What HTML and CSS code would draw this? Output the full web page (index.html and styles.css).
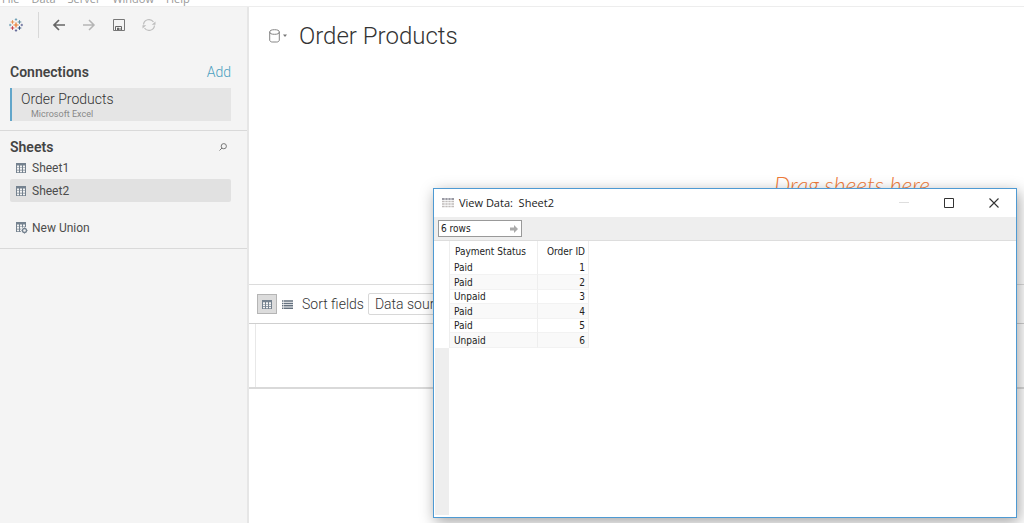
FILE: index.html
```html
<!DOCTYPE html>
<html lang="en">
<head>
<meta charset="utf-8">
<title>Order Products</title>
<link rel="stylesheet" href="styles.css">
</head>
<body>
<svg class="defs" aria-hidden="true">
  <symbol id="grid" viewBox="0 0 10 10">
    <path d="M0 0h10v10H0z" fill="#75828f"/>
    <path d="M1 2.500h2v1.900H1zM4 2.500h2v1.900H4zM7 2.500h2v1.900H7zM1 5h2v1.800H1zM4 5h2v1.800H4zM7 5h2v1.800H7zM1 7.400h2v1.900H1zM4 7.400h2v1.900H4zM7 7.400h2v1.900H7z" fill="#f4f4f4"/>
  </symbol>
</svg>
<nav class="menubar">
  <a href="#">File</a><a href="#">Data</a><a href="#">Server</a><a href="#">Window</a><a href="#">Help</a>
</nav>
<div class="app">
  <aside class="sidebar">
    <div class="tools">
      <button class="tool logo" aria-label="Start page">
        <svg width="14" height="14" viewBox="0 0 14 14" fill="none" stroke-width="1">
          <path d="M7 4.500v5M4.500 7h5" stroke="#ea7b2c" stroke-width="1.200"/>
          <path d="M3.500 2.200v3.600M1.700 4h3.600" stroke="#e79355"/>
          <path d="M10.500 2.200v3.600M8.700 4h3.600" stroke="#5b8a9b"/>
          <path d="M3.500 8.200v3.600M1.700 10h3.600" stroke="#c6404c"/>
          <path d="M10.500 8.200v3.600M8.700 10h3.600" stroke="#35527f"/>
          <path d="M7 .2v2.600M5.800 1.500h2.400M0 7h2.400M1.200 5.800v2.400" stroke="#74a3b8"/>
          <path d="M7 11.200v2.600M5.800 12.500h2.400M11.600 7H14M12.800 5.800v2.400" stroke="#6a6f9c"/>
        </svg>
      </button>
      <span class="tool-rule"></span>
      <button class="tool back" aria-label="Back">
        <svg width="14" height="12" viewBox="0 0 14 12" fill="none" stroke="#666" stroke-width="1.700"><path d="M13 6H2M7 1L2 6l5 5"/></svg>
      </button>
      <button class="tool" aria-label="Forward">
        <svg width="14" height="12" viewBox="0 0 14 12" fill="none" stroke="#b5b5b5" stroke-width="1.500"><path d="M1 6h11M7 1l5 5-5 5"/></svg>
      </button>
      <button class="tool" aria-label="Save">
        <svg width="14" height="14" viewBox="0 0 14 14" fill="none" stroke="#777"><path d="M1.500 1.500h11v11h-11z"/><path d="M3.500 12V8.500h6V12M5.500 12v-2h1v2M8 10v2" stroke="#666"/></svg>
      </button>
      <button class="tool" aria-label="Refresh">
        <svg width="14" height="14" viewBox="0 0 14 14" fill="none" stroke="#bdbdbd" stroke-width="1.200"><path d="M1.500 6.500a5.500 5.500 0 0 1 10-2.500M12.500 7.500a5.500 5.500 0 0 1-10 2.500"/><path d="M13.500 3.500v3.300h-3.800zM.5 10.500V7.200h3.800z" fill="#bdbdbd" stroke="none"/></svg>
      </button>
    </div>
    <section class="panel connections">
      <div class="panel-head"><h2>Connections</h2><a class="add" href="#">Add</a></div>
      <button class="connection"><span class="conn-name">Order Products</span><span class="conn-type">Microsoft Excel</span></button>
    </section>
    <section class="panel sheets">
      <div class="panel-head"><h2>Sheets</h2>
        <button class="search" aria-label="Search sheets"><svg width="8" height="8" viewBox="0 0 8 8" fill="none" stroke="#777"><circle cx="4.800" cy="3.200" r="2.600"/><path d="M3 5L.5 7.500"/></svg></button>
      </div>
      <button class="sheet"><svg width="10" height="10"><use href="#grid"/></svg>Sheet1</button>
      <button class="sheet selected"><svg width="10" height="10"><use href="#grid"/></svg>Sheet2</button>
      <button class="sheet union">
        <svg width="12" height="12" viewBox="0 0 12 12"><use href="#grid" width="10" height="10"/><circle cx="8.500" cy="8.500" r="3.500" fill="#f4f4f4"/><circle cx="8.500" cy="8.500" r="2" fill="none" stroke="#75828f" stroke-width="1.300"/><path d="M8.500 5.500v1M8.500 10.500v1M5.500 8.500h1M10.500 8.500h1" stroke="#75828f"/></svg>New Union</button>
    </section>
  </aside>
  <main class="main">
    <header class="source">
      <button class="source-menu" aria-label="Data source menu">
        <svg width="20" height="14" viewBox="0 0 20 14" fill="none" stroke="#858585"><ellipse cx="5.500" cy="3" rx="4.800" ry="2.300"/><path d="M.7 3v8c0 1.300 1.200 2 2.500 2h4.600c1.300 0 2.500-.7 2.500-2V3"/><path d="M14 5.500h4L16 8z" fill="#777" stroke="none"/></svg>
      </button>
      <h1>Order Products</h1>
    </header>
    <div class="canvas"><p class="hint">Drag sheets here</p></div>
    <div class="fields-bar">
      <button class="view active" aria-label="Grid view"><svg width="10" height="9" viewBox="0 0 10 10" preserveAspectRatio="none"><use href="#grid"/></svg></button>
      <button class="view" aria-label="List view"><svg width="11" height="9" viewBox="0 0 11 9"><path d="M0 1h1.500M0 3.400h1.500M0 5.800h1.500M0 8.200h1.500M2 1h9M2 3.400h9M2 5.800h9M2 8.200h9" stroke="#64717f" stroke-width="1.500"/></svg></button>
      <label for="sort">Sort fields</label>
      <select id="sort"><option>Data source order</option></select>
    </div>
    <div class="preview"></div>
  </main>
</div>
<section class="dialog" role="dialog" aria-labelledby="dialog-title">
  <header class="titlebar">
    <svg width="12" height="10" viewBox="0 0 12 10" fill="none"><path d="M0 1h12" stroke="#9999a3" stroke-width="2"/><path d="M0 3.500h12M0 6h12M0 8.500h12" stroke="#c0bcba" stroke-width="1.700"/><path d="M3 0v10M6 0v10M9 0v10" stroke="#fff" stroke-width=".7"/></svg>
    <h2 id="dialog-title">View Data:&nbsp; Sheet2</h2>
    <button aria-label="Minimize"><svg width="10" height="10" fill="none" stroke="#dedede"><path d="M0 4.500h10"/></svg></button>
    <button aria-label="Maximize"><svg width="10" height="10" fill="none" stroke="#333"><path d="M.5.5h9v9h-9z"/></svg></button>
    <button aria-label="Close"><svg width="10" height="10" fill="none" stroke="#333" stroke-width="1.100"><path d="M.5.5l9 9M9.500.5l-9 9"/></svg></button>
  </header>
  <div class="rows-bar">
    <div class="rows-box">
      <input aria-label="Row count" value="6 rows">
      <button aria-label="Apply row count"><svg width="8" height="8" viewBox="0 0 8 8"><path d="M0 2.500h4V0l4 4-4 4V5.500H0z" fill="#aaa"/></svg></button>
    </div>
  </div>
  <div class="data">
    <div class="gutter"></div>
    <table>
      <thead><tr><th>Payment Status</th><th>Order ID</th></tr></thead>
      <tbody>
        <tr><td>Paid</td><td>1</td></tr>
        <tr><td>Paid</td><td>2</td></tr>
        <tr><td>Unpaid</td><td>3</td></tr>
        <tr><td>Paid</td><td>4</td></tr>
        <tr><td>Paid</td><td>5</td></tr>
        <tr><td>Unpaid</td><td>6</td></tr>
      </tbody>
    </table>
  </div>
</section>
</body>
</html>
```
FILE: styles.css
```css
* { box-sizing: border-box; }
body {
  margin: 0;
  height: 100vh;
  display: flex;
  flex-direction: column;
  overflow: hidden;
  background: #fff;
  color: #4c4c4c;
  font: 13px/16px Roboto, sans-serif;
}
h1, h2, p { margin: 0; font-weight: 400; }
button { margin: 0; padding: 0; border: 0; background: none; font: inherit; color: inherit; text-align: left; }
svg { display: block; flex: none; }
a { text-decoration: none; color: inherit; }
.defs { position: absolute; width: 0; height: 0; }

.menubar {
  height: 7px;
  flex: none;
  display: flex;
  align-items: flex-end;
  gap: 12px;
  padding-left: 2px;
  overflow: hidden;
  border-bottom: 1px solid #ededed;
  color: #999;
  font: 11px/14px "Open Sans", sans-serif;
}

.app { flex: 1; display: flex; min-height: 0; }
.sidebar { width: 249px; flex: none; background: #f4f4f4; border-right: 2px solid #e6e6e6; }
.tools { display: flex; align-items: center; height: 36px; padding-left: 9px; gap: 16px; }
.tool { width: 14px; }
.tool-rule { width: 1px; height: 26px; margin: 0 -3px 0 -1px; background: #d8d8d8; }
.panel { border-bottom: 1px solid #d9d9d9; }
.panel-head { display: flex; justify-content: space-between; align-items: center; padding: 0 16px 0 10px; }
.panel-head h2 { font-size: 14px; font-weight: 600; color: #444; }
.connections { padding: 20px 0 9px; }
.connections .panel-head { height: 18px; margin-bottom: 7px; }
.add { font-size: 14px; font-weight: 300; color: #4b9fc0; }
.connection {
  display: block;
  width: 221px;
  height: 33px;
  margin-left: 10px;
  padding-left: 9px;
  border-left: 2px solid #62a6ca;
  background: #e5e5e5;
}
.connection span { display: block; }
.conn-name { font-size: 14px; font-weight: 300; line-height: 18px; padding-top: 1px; color: #333; }
.conn-type { padding-left: 10px; font-size: 9px; line-height: 12px; color: #888; }
.sheets { height: 118px; padding-top: 7px; }
.sheets .panel-head { height: 18px; padding-right: 20px; }
.sheet { display: flex; align-items: center; gap: 6px; width: 221px; height: 23px; margin-left: 10px; padding-left: 6px; font-size: 12px; }
.selected { background: #e1e1e1; border-radius: 2px; }
.union { margin-top: 14px; gap: 4px; }

.main { flex: 1; min-width: 0; display: flex; flex-direction: column; }
.source { display: flex; align-items: center; gap: 10px; height: 58px; padding-left: 20px; }
.source h1 { font: 24px/32px Roboto, sans-serif; font-weight: 300; color: #333; }
.canvas { height: 219px; padding-top: 106px; padding-left: 428px; }
.hint { width: 350px; text-align: center; font: italic 300 23px/28px Lato, sans-serif; color: #ee7a38; }
.fields-bar {
  display: flex;
  align-items: center;
  height: 40px;
  padding-left: 8px;
  border-top: 1px solid #dcdcdc;
  border-bottom: 1px solid #cfcfcf;
}
.view { width: 20px; height: 20px; display: grid; place-items: center; border: 1px solid transparent; }
.view.active { background: #dcdcdc; border-color: #b5b5b5; }
.fields-bar label { margin: 0 4px 0 5px; font-size: 14px; font-weight: 300; color: #333; }
.fields-bar select {
  appearance: none;
  width: 150px;
  height: 22px;
  padding: 0 6px;
  border: 1px solid #d8d8d8;
  border-radius: 2px;
  background: #fff;
  color: #333;
  font: 300 14px/18px Roboto, sans-serif;
}
.preview { height: 65px; border-bottom: 2px solid #d9d9d9; padding-left: 6px; }
.preview::before { content: ""; display: block; height: 100%; border-left: 1px solid #e8e8e8; }

.dialog {
  position: absolute;
  left: 433px;
  right: 7px;
  top: 188px;
  bottom: 5px;
  display: flex;
  flex-direction: column;
  border: 1px solid #4e9ad3;
  background: #fff;
  box-shadow: 2px 4px 14px rgba(0, 0, 0, 0.36);
  color: #222;
  font: 10px/14px "DejaVu Sans Condensed", "DejaVu Sans", sans-serif;
}
.titlebar { display: flex; align-items: center; height: 28px; flex: none; padding-left: 8px; }
.titlebar h2 { flex: 1; padding-left: 5px; font: 11px/16px "Open Sans", sans-serif; color: #222; }
.titlebar button { width: 45px; height: 28px; display: grid; place-items: center; }
.rows-bar { height: 24px; flex: none; padding: 3px 4px; background: #eee; border-bottom: 1px solid #ddd; }
.rows-box { display: flex; align-items: center; width: 84px; height: 17px; padding-right: 3px; border: 1px solid #999; background: #fff; }
.rows-box input { flex: 1; min-width: 0; padding: 0 2px; border: 0; background: none; color: #222; font: 10px/14px "DejaVu Sans Condensed", "DejaVu Sans", sans-serif; }
.data { flex: 1; display: flex; align-items: flex-start; padding-left: 1px; }
.gutter { align-self: stretch; width: 14px; margin: 107px 0 2px; background: #eee; }
table { border-collapse: separate; border-spacing: 0; width: 140px; table-layout: fixed; border-left: 1px solid #eee; }
th, td { padding: 0 3px 0 4px; border-right: 1px solid #eee; font-weight: 400; text-align: left; white-space: nowrap; }
td { height: 14px; padding-top: 1px; line-height: 12px; border-bottom: 1px solid #f2f2f2; }
tr:nth-child(even) td { height: 15px; }
th { width: 88px; height: 20px; padding: 2px 3px 0 5px; line-height: 18px; }
th:last-child { width: 51px; padding-left: 0; }
th:last-child, td:last-child { text-align: right; }
tbody tr:nth-child(even) { background: #f9f9f9; }
```
